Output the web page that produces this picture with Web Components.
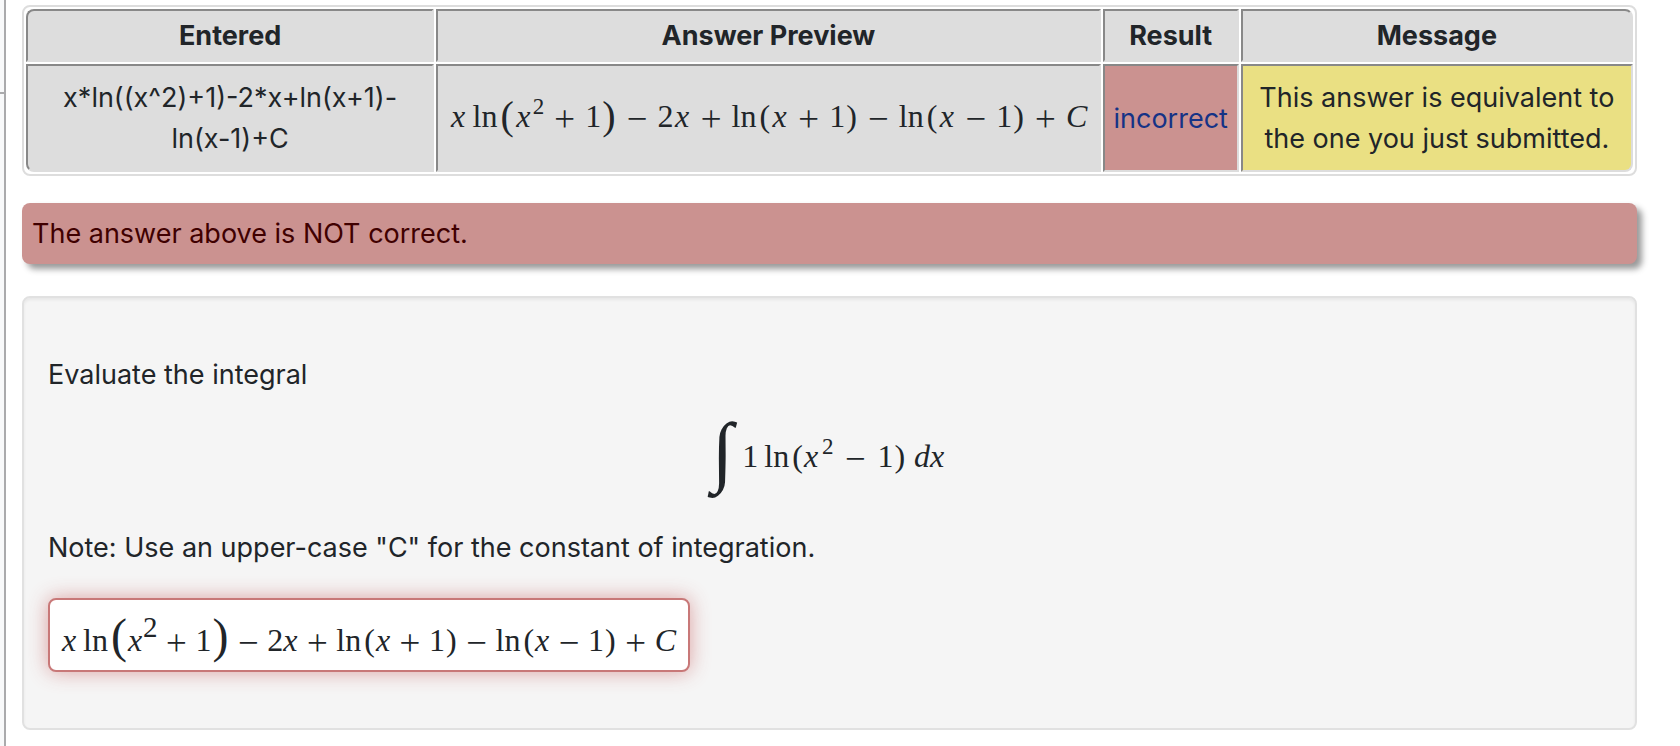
<!DOCTYPE html>
<html lang="en">
<head>
<meta charset="utf-8">
<title>Evaluate the integral</title>
<style>
    body {
        margin: 0;
        background: #ffffff;
        color: #212529;
        font: 27px/41px Inter, "Liberation Sans", sans-serif;
    }
</style>
</head>
<body>
<problem-page>
    <attempt-results></attempt-results>
    <result-banner>The answer above is NOT correct.</result-banner>
    <problem-body></problem-body>
</problem-page>

<script>
// Each element keeps its markup and styles in an open shadow root
function define(name, html) {
    const template = document.createElement('template');
    template.innerHTML = html;
    customElements.define(name, class extends HTMLElement {
        constructor() {
            super();
            this.attachShadow({ mode: 'open' });
            this.shadowRoot.appendChild(template.content.cloneNode(true));
        }
    });
}

// Typeset formula. Source tokens are separated by spaces:
// names go italic, "^2" is raised, "[" and "]" are tall parentheses
class MathFormula extends HTMLElement {
    constructor() {
        super();
        this.attachShadow({ mode: 'open' });
    }
    connectedCallback() {
        const tokens = this.getAttribute('src').split(' ');
        this.shadowRoot.innerHTML = /*html*/`
            <style>
                :host {
                    display: inline-block;
                    font: 32px/48px "Liberation Serif", serif;
                    white-space: nowrap;
                }
                span, i { display: inline-block; }
                .var { min-width: var(--var-width, 17px); }
                .fn { margin: 0 2px 0 6px; }
                .op {
                    width: var(--op-width, 41px);
                    text-align: center;
                    font-family: Inter, sans-serif;
                    font-weight: 200;
                    font-size: 40px;
                    line-height: 32px;
                    vertical-align: -3px;
                }
                .op + .fn { margin-left: 0; }
                .par { margin: 0 1px; }
                .big { font-size: var(--big-size, 40px); line-height: 32px; vertical-align: var(--big-shift, -2px); }
                .sup { font-size: var(--sup-size, 23px); line-height: 23px; vertical-align: var(--sup-shift, 13px); margin-left: var(--sup-gap, 1px); }
                .int { font-size: 78px; line-height: 70px; font-style: italic; vertical-align: -10px; margin-right: 9px; }
                .d { margin-left: 8px; }
            </style>${tokens.map(t => this.render(t)).join('')}`;
    }
    render(token) {
        if (token === '+' || token === '-') return `<span class="op">${token === '-' ? '−' : '+'}</span>`;
        if (token === '(' || token === ')') return `<span class="par">${token}</span>`;
        if (token === '[') return '<span class="par big">(</span>';
        if (token === ']') return '<span class="par big">)</span>';
        if (token[0] === '^') return `<span class="sup">${token.slice(1)}</span>`;
        if (token === 'ln') return '<span class="fn">ln</span>';
        if (token === 'int') return '<span class="int">∫</span>';
        if (token === 'd') return '<i class="d">d</i>';
        if (/[a-zA-Z]/.test(token)) return `<i class="var">${token}</i>`;
        return `<span>${token}</span>`;
    }
}
customElements.define('math-formula', MathFormula);

define('problem-page', /*html*/`
    <style>
        :host { display: flex; min-height: 100vh; }
        /* edge of the site navigation */
        aside { width: 4px; border-right: 2px solid #aaaaac; background: #f8f9fa; }
        aside div { height: 92px; border-bottom: 2px solid #aaaaac; }
        main { flex: 1; min-width: 0; padding: 5px 43px 16px 16px; }
    </style>
    <aside><div></div></aside>
    <main><slot></slot></main>
`);

define('attempt-results', /*html*/`
    <style>
        :host { display: block; margin-bottom: 27px; }
        table {
            width: 100%;
            border: 2px solid #dddddd;
            border-radius: 8px;
            border-collapse: separate;
            border-spacing: 2px;
            text-align: center;
            table-layout: fixed;
        }
        th, td {
            box-sizing: border-box;
            border: 2px solid;
            border-color: #888888 #dddddd #dddddd #888888;
            background: #dddddd;
            padding: 4px;
        }
        td { padding: 11px 8px; }
        th { font-weight: 700; }
        th:first-child { border-top-left-radius: 8px; }
        th:last-child { border-top-right-radius: 8px; }
        tbody td:first-child { border-bottom-left-radius: 8px; }
        tbody td:last-child { border-bottom-right-radius: 8px; }
        .entered { width: 25.5%; }
        .preview { width: 41.5%; }
        .result { width: 8.5%; }
        td.preview { padding: 0 0 4px; }
        td.result { padding: 0; background: #cb9290; }
        td.message { background: #eae083; }
        .entered span { white-space: nowrap; }
        a { color: #153386; text-decoration: none; }
    </style>
    <table>
        <thead>
            <tr>
                <th class="entered" scope="col">Entered</th>
                <th class="preview" scope="col">Answer Preview</th>
                <th class="result" scope="col">Result</th>
                <th class="message" scope="col">Message</th>
            </tr>
        </thead>
        <tbody>
            <tr>
                <td class="entered"><span>x*ln((x^2)+1)-2*x+ln(x+1)-</span><wbr><span>ln(x-1)+C</span></td>
                <td class="preview"><math-formula src="x ln [ x ^2 + 1 ] - 2 x + ln ( x + 1 ) - ln ( x - 1 ) + C"></math-formula></td>
                <td class="result"><a href="#answer">incorrect</a></td>
                <td class="message">This answer is equivalent to the one you just submitted.</td>
            </tr>
        </tbody>
    </table>
`);

define('result-banner', /*html*/`
    <style>
        :host {
            display: block;
            margin-bottom: 32px;
            padding: 10px;
            border-radius: 8px;
            background: #cb9290;
            color: #400000;
            box-shadow: 5px 5px 6px #999999;
        }
    </style>
    <slot></slot>
`);

define('problem-body', /*html*/`
    <style>
        :host {
            display: block;
            padding: 56px 24px;
            border: 2px solid #e1e1e1;
            border-radius: 8px;
            background: #f5f5f5;
            box-shadow: inset 0 2px 3px rgba(0, 0, 0, 0.06);
        }
        p { margin: 0; }
        .display {
            display: flex;
            justify-content: center;
            align-items: center;
            box-sizing: border-box;
            height: 132px;
            padding-bottom: 20px;
            --op-width: 44px;
        }
        .answer {
            display: inline-block;
            box-sizing: border-box;
            margin-top: 30px;
            padding: 16px 12px 6px;
            border: 2px solid #c87878;
            border-radius: 8px;
            background: #ffffff;
            box-shadow: 0 0 20px rgba(190, 60, 60, 0.45);
            vertical-align: top;
            outline: none;
            line-height: 0;
            --op-width: 38px;
            --var-width: 15px;
            --big-size: 48px;
            --big-shift: -1px;
            --sup-size: 29px;
            --sup-shift: 14px;
            --sup-gap: 0px;
        }
    </style>
    <p>Evaluate the integral</p>
    <div class="display"><math-formula src="int 1 ln ( x ^2 - 1 ) d x"></math-formula></div>
    <p id="note">Note: Use an upper-case "C" for the constant of integration.</p>
    <div class="answer" id="answer" role="textbox" tabindex="0" aria-labelledby="note">
        <math-formula src="x ln [ x ^2 + 1 ] - 2 x + ln ( x + 1 ) - ln ( x - 1 ) + C"></math-formula>
    </div>
`);
</script>
</body>
</html>
